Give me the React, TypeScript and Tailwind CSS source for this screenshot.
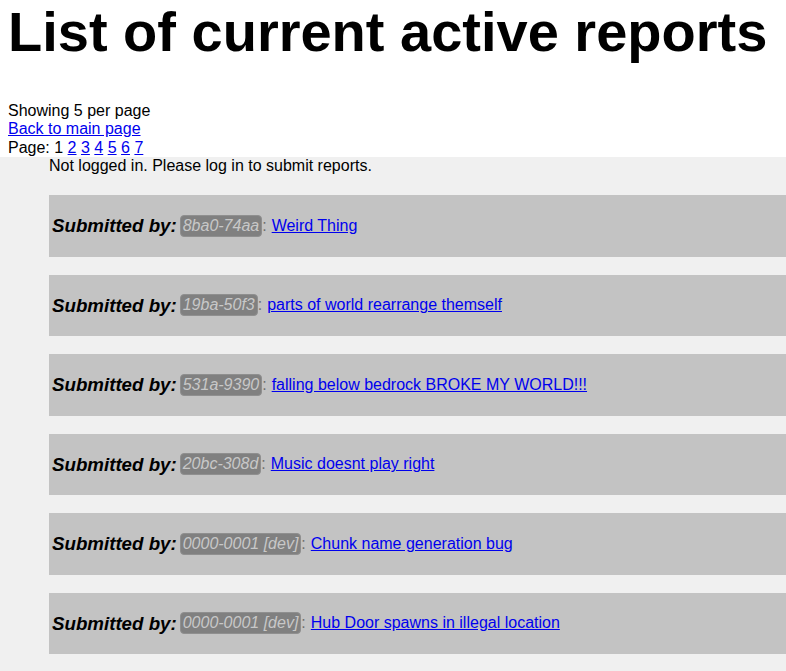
const REPORTS = [
  { id: "8ba0-74aa", title: "Weird Thing" },
  { id: "19ba-50f3", title: "parts of world rearrange themself" },
  { id: "531a-9390", title: "falling below bedrock BROKE MY WORLD!!!" },
  { id: "20bc-308d", title: "Music doesnt play right" },
  { id: "0000-0001 [dev]", title: "Chunk name generation bug" },
  { id: "0000-0001 [dev]", title: "Hub Door spawns in illegal location" },
];

const LINK = "text-[#0000ee] underline";

export default function App() {
  return (
    <div className="min-h-[671px] bg-[#f0f0f0] font-['Liberation_Sans',Arial,sans-serif] text-[16px] leading-[1.15] text-black">
      <div className="bg-white pl-2">
        <h1 className="m-0 mb-[37.5px] text-[56px] font-bold leading-[1.15]">
          List of current active reports
        </h1>
        <div>Showing 5 per page</div>
        <div>
          <a href="#" className={LINK}>
            Back to main page
          </a>
        </div>
        <div>
          Page: 1{" "}
          {[2, 3, 4, 5, 6, 7].map((n) => (
            <span key={n}>
              <a href="#" className={LINK}>
                {n}
              </a>{" "}
            </span>
          ))}
        </div>
      </div>

      <div className="pl-[49px] pb-4">
        <p className="m-0">Not logged in. Please log in to submit reports.</p>
        {REPORTS.map((r, i) => (
          <div
            key={i}
            className={`${i === 0 ? "mt-[19.6px]" : "mt-[18px]"} flex h-[61.5px] items-center bg-[#c3c3c3] pl-[3px]`}
          >
            <span className="text-[18.72px] font-bold italic">Submitted by:</span>
            <span className="ml-[3px] rounded-[4px] border border-[#8f8f8f] bg-[#808080] px-[2px] py-px italic leading-[18px] text-[#c8c8c8]">
              {r.id}
            </span>
            <span className="text-[#707070]">:</span>
            <a href="#" className={`${LINK} ml-[5px]`}>
              {r.title}
            </a>
          </div>
        ))}
      </div>
    </div>
  );
}
